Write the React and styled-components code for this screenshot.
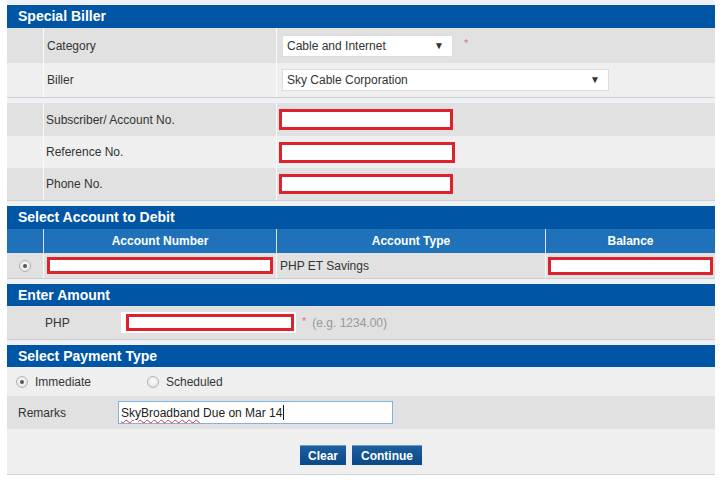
import React from 'react';
import styled, { createGlobalStyle, css } from 'styled-components';

const Global = createGlobalStyle`
  html,body{margin:0;padding:0;background:#fff;}
  body{font-family:"Liberation Sans",Arial,sans-serif;font-size:12px;color:#333;}
`;

const Panel = styled.div`
  margin-left:7px;width:708px;padding-top:5px;background:#eef2f6;
  border-bottom:1px solid #cfd3d7;box-sizing:border-box;
`;

const SectionTitle = styled.div`
  height:${p => p.$h ?? 23}px;line-height:${p => p.$h ?? 23}px;padding-left:11px;background:#0055a4;
  color:#fff;font-weight:700;font-size:14px;
`;

const Group = styled.div`
  border-bottom:1px solid #cfcfcf;margin-bottom:${p => p.$gap ?? 5}px;
`;

const shade = css`
  background:${p => (p.$light ? '#efefef' : '#e1e1e1')};
`;

const FormRow = styled.div`
  display:grid;grid-template-columns:36px 233px 1fr;height:${p => p.$h}px;${shade}
`;

const Cell = styled.div`
  display:flex;align-items:center;border-left:${p => (p.$first ? 'none' : '1px solid #fafafa')};
  padding-left:${p => p.$pad ?? 0}px;box-sizing:border-box;min-width:0;
  justify-content:${p => p.$center ? 'center' : 'flex-start'};
`;

const Select = styled.div`
  position:relative;display:flex;align-items:center;box-sizing:border-box;
  width:${p => p.$w}px;height:22px;background:#fff;border:1px solid #dcdcdc;
  padding-left:4px;font-size:12px;color:#333;
  &::after{content:'▼';position:absolute;right:8px;top:4px;font-size:10px;color:#333;}
`;

const Required = styled.span`
  color:#e0707c;font-size:11px;margin-left:${p => p.$ml ?? 11}px;
  align-self:${p => (p.$mid ? 'center' : 'flex-start')};
  margin-top:${p => p.$mt ?? 9}px;
`;

const Redacted = styled.div`
  box-sizing:border-box;width:${p => p.$w}px;height:${p => p.$h}px;
  background:#fff;border:3px solid #dc222c;
`;

const HeadRow = styled.div`
  display:grid;grid-template-columns:36px 233px 269px 1fr;height:24px;background:#1f72ba;
`;

const HeadCell = styled.div`
  display:flex;align-items:center;justify-content:center;color:#fff;font-weight:700;font-size:12px;
  border-left:${p => (p.$first ? 'none' : '1px solid #d8e6f2')};
`;

const DataRow = styled.div`
  display:grid;grid-template-columns:36px 233px 269px 1fr;height:25px;background:#e1e1e1;
`;

const Radio = styled.span`
  display:inline-block;box-sizing:border-box;width:12px;height:12px;border-radius:50%;
  border:1px solid #b4b4b4;background:radial-gradient(circle at 50% 40%,#fcfcfc,#dcdcdc);
  position:relative;flex:none;
  ${p => p.$on && css`
    &::after{content:'';position:absolute;left:3px;top:3px;width:4px;height:4px;border-radius:50%;background:#555;}
  `}
`;

const AmountRow = styled.div`
  display:flex;align-items:center;height:33px;background:#e1e1e1;padding-left:38px;
`;

const AmountLabel = styled.span`
  width:76px;
`;

const InputShell = styled.div`
  background:#fff;padding:2px 2px 2px 5px;display:flex;
`;

const Hint = styled.span`
  color:#999;margin-left:6px;font-size:12px;
`;

const ChoiceRow = styled.div`
  display:flex;align-items:center;height:29px;background:#efefef;padding-left:9px;
`;

const Choice = styled.label`
  display:flex;align-items:center;gap:7px;width:131px;color:#333;
`;

const RemarksRow = styled.div`
  display:flex;align-items:center;height:33px;background:#e1e1e1;padding-left:11px;
`;

const RemarksLabel = styled.span`
  width:100px;
`;

const TextBox = styled.div`
  box-sizing:border-box;width:275px;height:23px;background:#fff;border:1px solid #7fb2e5;
  display:flex;align-items:center;padding-left:2px;font-size:12px;color:#222;
`;

const Misspelled = styled.span`
  text-decoration:underline wavy #e03030;text-decoration-thickness:1px;text-underline-offset:2px;
`;

const Caret = styled.span`
  display:inline-block;width:1px;height:15px;background:#111;margin-left:1px;
`;

const Actions = styled.div`
  display:flex;justify-content:center;gap:6px;padding:16px 0 9px;background:#efefef;
`;

const Button = styled.button`
  height:20px;padding:0 ${p => p.$px}px;border:none;border-top:1px solid #6f9cc8;
  background:linear-gradient(#1d5fa0,#0a4785);color:#fff;font-weight:700;font-size:12px;
  font-family:"Liberation Sans",Arial,sans-serif;cursor:pointer;
`;

export default function App(){
  return(
    <>
      <Global/>
      <Panel>
        <SectionTitle>Special Biller</SectionTitle>
        <Group>
          <FormRow $h={35}>
            <Cell $first/>
            <Cell $pad={3}>Category</Cell>
            <Cell $pad={5}>
              <Select $w={171}>Cable and Internet</Select>
              <Required>*</Required>
            </Cell>
          </FormRow>
          <FormRow $h={34} $light>
            <Cell $first/>
            <Cell $pad={3}>Biller</Cell>
            <Cell $pad={5}><Select $w={327}>Sky Cable Corporation</Select></Cell>
          </FormRow>
        </Group>
        <Group>
          <FormRow $h={33}>
            <Cell $first/>
            <Cell $pad={2}>Subscriber/ Account No.</Cell>
            <Cell $pad={2}><Redacted $w={174} $h={21}/></Cell>
          </FormRow>
          <FormRow $h={32} $light>
            <Cell $first/>
            <Cell $pad={2}>Reference No.</Cell>
            <Cell $pad={2}><Redacted $w={176} $h={21}/></Cell>
          </FormRow>
          <FormRow $h={32}>
            <Cell $first/>
            <Cell $pad={2}>Phone No.</Cell>
            <Cell $pad={2}><Redacted $w={174} $h={20}/></Cell>
          </FormRow>
        </Group>

        <SectionTitle>Select Account to Debit</SectionTitle>
        <Group>
          <HeadRow>
            <HeadCell $first/>
            <HeadCell>Account Number</HeadCell>
            <HeadCell>Account Type</HeadCell>
            <HeadCell>Balance</HeadCell>
          </HeadRow>
          <DataRow>
            <Cell $first $center><Radio $on/></Cell>
            <Cell $pad={3}><Redacted $w={226} $h={17}/></Cell>
            <Cell $pad={3}>PHP ET Savings</Cell>
            <Cell $pad={2}><Redacted $w={165} $h={18}/></Cell>
          </DataRow>
        </Group>

        <SectionTitle $h={22}>Enter Amount</SectionTitle>
        <Group>
          <AmountRow>
            <AmountLabel>PHP</AmountLabel>
            <InputShell><Redacted $w={168} $h={17}/></InputShell>
            <Required $ml={6} $mt={-4} $mid>*</Required>
            <Hint>(e.g. 1234.00)</Hint>
          </AmountRow>
        </Group>

        <SectionTitle $h={22}>Select Payment Type</SectionTitle>
        <ChoiceRow>
          <Choice><Radio $on/>Immediate</Choice>
          <Choice><Radio/>Scheduled</Choice>
        </ChoiceRow>
        <RemarksRow>
          <RemarksLabel>Remarks</RemarksLabel>
          <TextBox><Misspelled>SkyBroadband</Misspelled>&nbsp;Due on Mar 14<Caret/></TextBox>
        </RemarksRow>
        <Actions>
          <Button $px={8}>Clear</Button>
          <Button $px={9}>Continue</Button>
        </Actions>
      </Panel>
    </>
  );
}
